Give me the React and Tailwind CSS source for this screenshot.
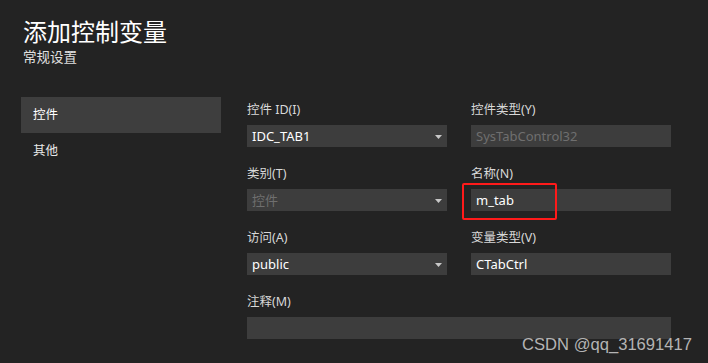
import React from 'react';

const font = { fontFamily: '"Noto Sans", "Noto Sans CJK SC", sans-serif' };

const Arrow = () => (
  <svg width="7" height="4" viewBox="0 0 7 4" className="absolute right-[5px] top-[10px]">
    <path d="M0 0 L7 0 L3.5 4 Z" fill="#c8c8c8" />
  </svg>
);

const Field = ({ label, value, select, disabled, span, highlight }) => (
  <div className={span ? 'col-span-2 flex flex-col' : 'flex flex-col'}>
    <div className="h-[20px] text-[12.5px] leading-[20px] text-[#d8d8d8]">{label}</div>
    <div className="relative mt-[5px] h-[22px] bg-[#3d3d3d]">
      <span
        className={
          'absolute left-[5px] top-0 text-[13px] leading-[22px] ' +
          (disabled ? 'text-[#6f6f6f]' : 'text-white')
        }
      >
        {value}
      </span>
      {select && <Arrow />}
      {highlight && (
        <div className="absolute left-[-9px] top-[-6px] h-[37px] w-[95px] rounded-[2px] border-2 border-[#ff1a1a]" />
      )}
    </div>
  </div>
);

export default function App() {
  return (
    <div className="relative h-[363px] w-[708px] overflow-hidden bg-[#232323]" style={font}>
      <div className="pl-[23px] pt-[17px]">
        <div className="h-[30px] text-[24px] leading-[30px] text-white">添加控制变量</div>
        <div className="h-[20px] text-[13.5px] leading-[20px] text-[#e0e0e0]">常规设置</div>
      </div>

      <div className="mt-[30px] flex">
        <div className="ml-[21px] flex w-[200px] flex-col">
          <div className="h-[36px] bg-[#3e3e3e] pl-[12px] text-[12.5px] leading-[36px] text-white">控件</div>
          <div className="h-[36px] pl-[12px] text-[12.5px] leading-[36px] text-[#e8e8e8]">其他</div>
        </div>

        <div className="ml-[26px] mt-[3px] grid w-[424px] grid-cols-2 gap-x-[24px] gap-y-[17px]">
          <Field label="控件 ID(I)" value="IDC_TAB1" select />
          <Field label="控件类型(Y)" value="SysTabControl32" disabled />
          <Field label="类别(T)" value="控件" select disabled />
          <Field label="名称(N)" value="m_tab" highlight />
          <Field label="访问(A)" value="public" select />
          <Field label="变量类型(V)" value="CTabCtrl" />
          <Field label="注释(M)" value="" span />
        </div>
      </div>

      <div
        className="absolute bottom-[8px] right-[16px] text-[16.6px] leading-[20px] text-[#b4b4b4]"
        style={{ fontFamily: '"Liberation Sans", Arial, sans-serif' }}
      >
        CSDN @qq_31691417
      </div>
    </div>
  );
}
